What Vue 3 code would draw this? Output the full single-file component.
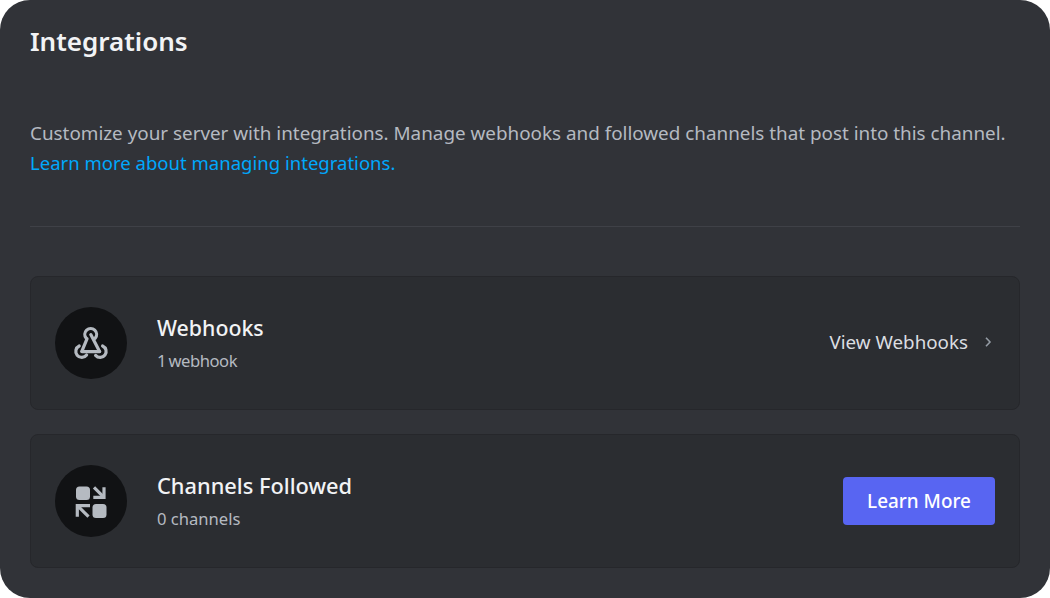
<script setup>
const description = "Customize your server with integrations. Manage webhooks and followed channels that post into this channel.";
</script>

<template>
  <div class="page">
    <h1 class="page__title">Integrations</h1>
    <p class="page__desc">
      {{ description }}<br />
      <a class="page__link">Learn more about managing integrations.</a>
    </p>
    <div class="page__divider"></div>

    <div class="row">
      <div class="row__icon">
        <svg width="36" height="36" viewBox="0 0 36 36" fill="none" stroke="#b5bac1" stroke-width="3.2" stroke-linecap="round">
          <path d="M13.2 13.3A5.9 5.9 0 1 1 22.2 13.3" />
          <path d="M17.8 9.6 26.6 26.4" />
          <path d="M14 13.8 8.8 26.4" />
          <path d="M6.2 21A6 6 0 1 0 13.6 30" />
          <path d="M9 26.6H26.6" />
          <path d="M22.6 30.4A6 6 0 1 0 29.6 21" />
        </svg>
      </div>
      <div class="row__text">
        <div class="row__name">Webhooks</div>
        <div class="row__sub row__sub--tight">1 webhook</div>
      </div>
      <div class="row__action">
        <span>View Webhooks</span>
        <svg width="16" height="16" viewBox="0 0 16 16" fill="none" stroke="#949ba4" stroke-width="1.6">
          <path d="M7 3.8 11 8 7 12.2" />
        </svg>
      </div>
    </div>

    <div class="row">
      <div class="row__icon">
        <svg width="36" height="36" viewBox="0 0 36 36" fill="#b5bac1">
          <rect x="3" y="3.5" width="14" height="13.5" rx="3.5" />
          <rect x="19.5" y="21" width="14" height="14" rx="3.5" />
          <g fill="none" stroke="#b5bac1" stroke-width="3.2">
            <path d="M21 4.3l9 9" />
            <path d="M31 4.3v10H20.3" />
            <path d="M15.5 33.7l-10-10" />
            <path d="M4.3 33.7V22.7H17" />
          </g>
        </svg>
      </div>
      <div class="row__text">
        <div class="row__name row__name--wide">Channels Followed</div>
        <div class="row__sub">0 channels</div>
      </div>
      <button class="row__button">Learn More</button>
    </div>
  </div>
</template>

<style>
html, body {
  margin: 0;
  background: #fff;
}
</style>

<style scoped>
.page {
  box-sizing: border-box;
  width: 1050px;
  height: 598px;
  padding: 24px 30px 0 30px;
  background: #313338;
  border-radius: 30px;
  overflow: hidden;
  font-family: "Noto Sans", sans-serif;
}

.page__title {
  margin: 0;
  color: #f2f3f5;
  font-size: 26px;
  line-height: 34px;
  font-weight: 600;
}

.page__desc {
  margin: 60px 0 0 0;
  color: #b5bac1;
  font-size: 18.85px;
  line-height: 30px;
}

.page__link {
  color: #00a8fc;
  font-size: 18.55px;
}

.page__divider {
  height: 1px;
  margin-top: 48px;
  margin-bottom: 49px;
  background: #3f4147;
}

.row {
  display: flex;
  align-items: center;
  box-sizing: border-box;
  height: 134px;
  padding: 0 24px;
  margin-bottom: 24px;
  background: #2b2d31;
  border: 1px solid #26272b;
  border-radius: 8px;
}

.row__icon {
  display: flex;
  justify-content: center;
  align-items: center;
  width: 72px;
  height: 72px;
  margin-right: 30px;
  background: #111214;
  border-radius: 50%;
}

.row__text {
  flex: 1;
}

.row__name {
  color: #f2f3f5;
  font-size: 21.3px;
  line-height: 28px;
  font-weight: 500;
}

.row__name--wide {
  font-size: 21.8px;
}

.row__sub {
  margin-top: 8px;
  color: #b5bac1;
  font-size: 16.6px;
  line-height: 22px;
}

.row__sub--tight {
  word-spacing: -1.5px;
  letter-spacing: -0.45px;
}

.row__action {
  display: flex;
  align-items: center;
  gap: 11px;
  margin-bottom: 2px;
  color: #dbdee1;
  font-size: 18.8px;
}

.row__button {
  width: 152px;
  height: 48px;
  border: none;
  border-radius: 4px;
  background: #5865f2;
  color: #fff;
  font-family: inherit;
  font-size: 18.9px;
  font-weight: 500;
}
</style>
